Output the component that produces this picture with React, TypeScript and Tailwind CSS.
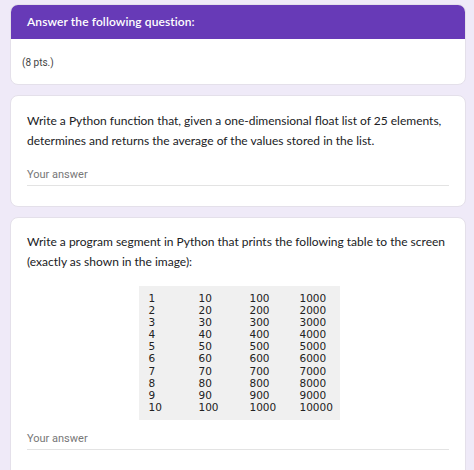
import React from "react";

const rows = [
  ["1", "10", "100", "1000"],
  ["2", "20", "200", "2000"],
  ["3", "30", "300", "3000"],
  ["4", "40", "400", "4000"],
  ["5", "50", "500", "5000"],
  ["6", "60", "600", "6000"],
  ["7", "70", "700", "7000"],
  ["8", "80", "800", "8000"],
  ["9", "90", "900", "9000"],
  ["10", "100", "1000", "10000"],
];

function AnswerField() {
  return (
    <div className="mr-[4px] border-b border-[#e3e3e3] pb-[3px] font-['Roboto',sans-serif] text-[11px] leading-[14px] text-[#777]">
      Your answer
    </div>
  );
}

function NumberTable() {
  return (
    <div className="flex justify-center pr-[2px]">
      <div className="w-[201px] bg-[#f0f0f0] pl-[10px] pt-[6px] pb-[7px] font-['DejaVu_Sans',sans-serif] text-[10.5px] leading-[12.1px] text-[#222]">
        {rows.map((r) => (
          <div key={r[0]} className="grid grid-cols-[50px_51px_50px_40px]">
            {r.map((c, i) => (
              <span key={i}>{c}</span>
            ))}
          </div>
        ))}
      </div>
    </div>
  );
}

export default function App() {
  return (
    <div className="min-h-[470px] bg-[#efeaf8] pt-[4px] pl-[10px] pr-[8px] font-['Lato',sans-serif]">
      <div className="flex flex-col gap-[10px]">
        <div className="overflow-hidden rounded-[8px] border border-[#e4e0ea] bg-white">
          <div className="flex h-[34px] items-center bg-[#673ab7] px-[16px] text-[12px] font-semibold tracking-[0.1px] text-white">
            Answer the following question:
          </div>
          <div className="h-[45px] px-[11px] pt-[16px] font-['Roboto',sans-serif] text-[10px] text-[#444]">
            (8 pts.)
          </div>
        </div>

        <div className="h-[112px] rounded-[8px] border border-[#e4e0ea] bg-white pl-[16px] pr-[12px] pt-[15px]">
          <p className="text-[12px] leading-[20px] text-[#202124]">
            Write a Python function that, given a one-dimensional float list of 25 elements,
            determines and returns the average of the values stored in the list.
          </p>
          <div className="mt-[17px]">
            <AnswerField />
          </div>
        </div>

        <div className="rounded-t-[8px] border border-[#e4e0ea] bg-white pl-[16px] pr-[12px] pt-[14px] pb-[22px]">
          <p className="text-[12px] leading-[20px] text-[#202124]">
            Write a program segment in Python that prints the following table to the screen
            (exactly as shown in the image):
          </p>
          <div className="mt-[14px]">
            <NumberTable />
          </div>
          <div className="mt-[12px]">
            <AnswerField />
          </div>
        </div>
      </div>
    </div>
  );
}
